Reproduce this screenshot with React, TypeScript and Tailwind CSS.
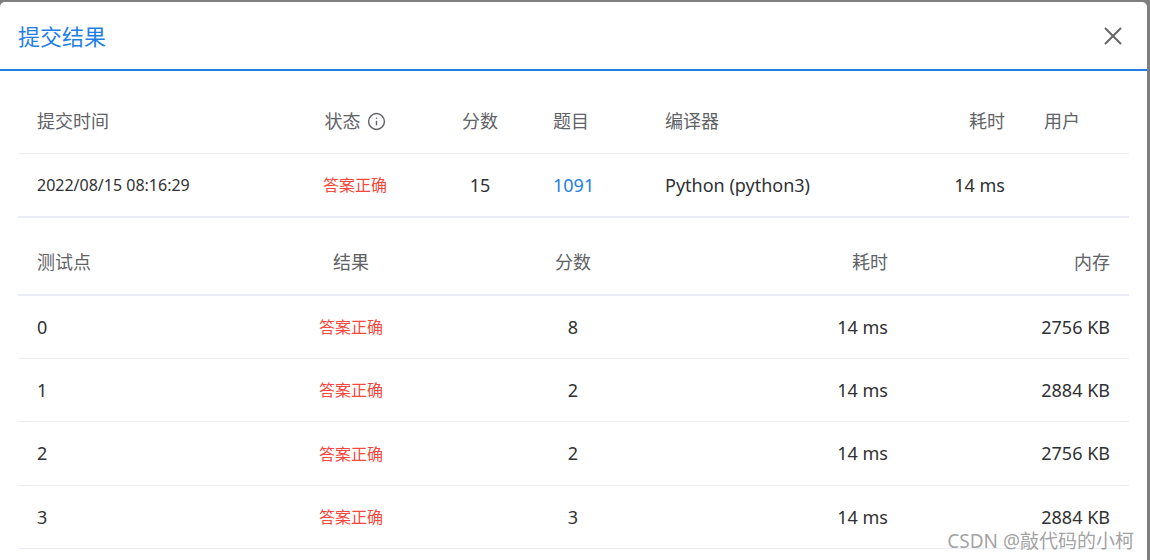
import { Info } from "lucide-react";

const font = { fontFamily: '"Noto Sans", "Noto Sans CJK SC", sans-serif' };

const cases = [
  { id: "0", score: "8", time: "14 ms", mem: "2756 KB", h: "h-[63px]" },
  { id: "1", score: "2", time: "14 ms", mem: "2884 KB", h: "h-[63px]" },
  { id: "2", score: "2", time: "14 ms", mem: "2756 KB", h: "h-[64px]" },
  { id: "3", score: "3", time: "14 ms", mem: "2884 KB", h: "h-[63px]" },
];

const cols1 = "grid grid-cols-[272px_130px_120px_110px_250px_120px_108px] items-center";
const cols2 = "grid grid-cols-[230px_206px_238px_211px_225px] items-center";

export default function App() {
  return (
    <div className="relative h-[560px] w-[1150px] overflow-hidden bg-[#7f7f7f] pr-[3px] pt-[2px]" style={font}>
      <div className="h-full rounded-t-[5px] bg-white">
        <div className="flex h-[69px] items-center justify-between border-b-2 border-[#1f7fe5] pl-[18px] pr-[25px]">
          <h2 className="text-[22px] leading-none text-[#1f7fe5]">提交结果</h2>
          <svg width="18" height="18" viewBox="0 0 18 18" className="text-[#666]">
            <path d="M1 1L17 17M17 1L1 17" stroke="currentColor" strokeWidth="2" />
          </svg>
        </div>

        <div className="px-[18px] pt-[19px]">
          <div className={`${cols1} h-[64px] border-b border-[#ebeef5] text-[18px] text-[#606266]`}>
            <div className="pl-[19px]">提交时间</div>
            <div className="flex items-center justify-center gap-[6px]">
              状态 <Info size={19} strokeWidth={1.8} />
            </div>
            <div className="text-center">分数</div>
            <div className="pl-[13px]">题目</div>
            <div className="pl-[15px]">编译器</div>
            <div className="pr-[15px] text-right">耗时</div>
            <div className="pl-[24px]">用户</div>
          </div>
          <div className={`${cols1} h-[64px] border-b-2 border-[#ebeef5] text-[18px] text-[#303133]`}>
            <div className="pl-[19px] text-[16px]">2022/08/15 08:16:29</div>
            <div className="text-center text-[16px] text-[#f5473b]">答案正确</div>
            <div className="text-center">15</div>
            <div className="pl-[13px] text-[#1f7fe5]">1091</div>
            <div className="pl-[15px]">Python (python3)</div>
            <div className="pr-[15px] text-right">14 ms</div>
            <div className="pl-[24px]"></div>
          </div>

          <div className={`${cols2} mt-[12px] h-[66px] border-b-2 border-[#ebeef5] text-[18px] text-[#606266]`}>
            <div className="pl-[19px]">测试点</div>
            <div className="text-center">结果</div>
            <div className="text-center">分数</div>
            <div className="pr-[15px] text-right">耗时</div>
            <div className="pr-[18px] text-right">内存</div>
          </div>
          {cases.map((c) => (
            <div key={c.id} className={`${cols2} ${c.h} border-b border-[#ebeef5] text-[18px] text-[#303133]`}>
              <div className="pl-[19px]">{c.id}</div>
              <div className="text-center text-[16px] text-[#f5473b]">答案正确</div>
              <div className="text-center">{c.score}</div>
              <div className="pr-[15px] text-right">{c.time}</div>
              <div className="pr-[18px] text-right">{c.mem}</div>
            </div>
          ))}
        </div>
      </div>

      <div className="absolute bottom-[5px] right-[16px] text-[19px] text-[#8a8a8a]/80">CSDN @敲代码的小柯</div>
    </div>
  );
}
